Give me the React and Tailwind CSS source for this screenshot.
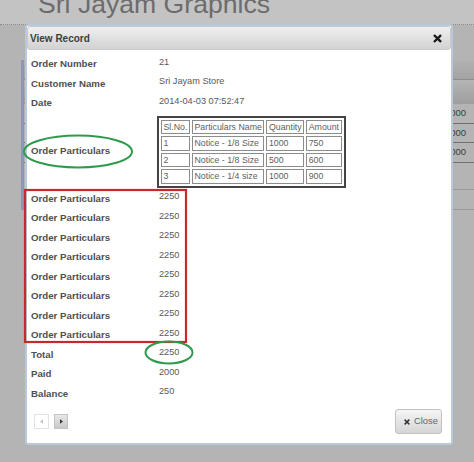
import React from 'react'

const topRows = [
  { label: 'Order Number', value: '21' },
  { label: 'Customer Name', value: 'Sri Jayam Store' },
  { label: 'Date', value: '2014-04-03 07:52:47' },
]

const particulars = [
  ['1', 'Notice - 1/8 Size', '1000', '750'],
  ['2', 'Notice - 1/8 Size', '500', '600'],
  ['3', 'Notice - 1/4 size', '1000', '900'],
]

const bottomRows = [
  { label: 'Total', value: '2250' },
  { label: 'Paid', value: '2000' },
  { label: 'Balance', value: '250' },
]

function XIcon({ className }) {
  return (
    <svg viewBox="0 0 10 10" className={className}>
      <path d="M2 2 L8 8 M8 2 L2 8" stroke="currentColor" strokeWidth="2.6" strokeLinecap="square" fill="none" />
    </svg>
  )
}

function Row({ label, value }) {
  return (
    <div className="flex items-center h-[19.5px]">
      <div className="w-[128px] shrink-0 font-bold text-[9.7px] text-[#505050]">{label}</div>
      <div className="mb-[4px] text-[9.2px] text-[#595959]">{value}</div>
    </div>
  )
}

function ParticularsTable() {
  const cell = 'border border-[#8c8c8c] px-[1.5px] text-[8.8px] leading-[12.5px] text-[#606060] font-normal whitespace-nowrap text-left'
  return (
    <table className="border-2 border-[#444] border-separate border-spacing-[2px]">
      <thead>
        <tr>
          <th className={`${cell} w-[26px]`}>Sl.No.</th>
          <th className={`${cell} w-[70px]`}>Particulars Name</th>
          <th className={`${cell} w-[35px]`}>Quantity</th>
          <th className={`${cell} w-[35px]`}>Amount</th>
        </tr>
      </thead>
      <tbody>
        {particulars.map((r) => (
          <tr key={r[0]}>
            {r.map((c, i) => (
              <td key={i} className={cell}>{c}</td>
            ))}
          </tr>
        ))}
      </tbody>
    </table>
  )
}

export default function App() {
  return (
    <div className="relative w-[474px] h-[462px] overflow-hidden bg-[#b4b4b4] font-['Liberation_Sans',Arial,sans-serif]">
      {/* page behind the overlay */}
      <div className="h-[25px] bg-[#c3c3c3] border-b border-dotted border-[#8a8a8a] overflow-hidden">
        <h1 className="pl-[38px] -mt-[9.5px] text-[26.6px] leading-none text-[#6c6c6c] whitespace-nowrap">Sri Jayam Graphics</h1>
      </div>
      <div className="ml-[21px] mt-[35px] border-l-[3px] border-[#8f95b6] h-[150px]">
        <div className="h-[20px] bg-linear-to-b from-[#b2b2b2] to-[#a3a3a3] border-b border-[#8d8d8d]" />
        <div className="mt-[2px] h-[22px] bg-linear-to-b from-[#b3b3b3] to-[#9e9e9e]" />
        {['2000', '1000', '3000'].map((v) => (
          <div key={v} className="h-[19.5px] border-b border-[#707070] flex items-center justify-end pr-[8px] text-[9.5px] text-[#3c3c3c]">
            {v}
          </div>
        ))}
        <div className="h-[27px] border-b border-[#9a9a9a]" />
        <div className="h-[20px] border-b border-[#9a9a9a]" />
      </div>

      {/* dialog */}
      <div className="absolute left-[25px] top-[24px] w-[428px] h-[421px] border-2 border-[#b9c8da] rounded-[3px] bg-white flex flex-col">
        <div className="h-[24px] shrink-0 flex items-center justify-between pl-[2px] pr-[8.5px] rounded-[3px] border border-[#c9c9c9] bg-linear-to-b from-[#f0f0f0] to-[#d2d2d2]">
          <span className="font-bold text-[10px] text-[#3d3d3d]">View Record</span>
          <XIcon className="w-[9px] h-[9px] text-[#1a1a1a]" />
        </div>

        <div className="pl-[4px] pt-[5px]">
          {topRows.map((r) => (
            <Row key={r.label} {...r} />
          ))}
          <div className="flex items-center py-[2px]">
            <div className="w-[126px] shrink-0 font-bold text-[9.7px] text-[#505050]">Order Particulars</div>
            <ParticularsTable />
          </div>
          {Array.from({ length: 8 }).map((_, i) => (
            <Row key={i} label="Order Particulars" value="2250" />
          ))}
          {bottomRows.map((r) => (
            <Row key={r.label} {...r} />
          ))}
        </div>

        <div className="mt-auto flex items-center justify-between pl-[7px] pr-[9px] pb-[9px]">
          <div className="flex gap-[5px]">
            <div className="w-[15px] h-[15px] border border-[#e2e2e2] bg-white flex items-center justify-center">
              <svg viewBox="0 0 4 6" className="w-[3px] h-[5px]">
                <path d="M4 0 L0 3 L4 6 Z" fill="#c4c4c4" />
              </svg>
            </div>
            <div className="w-[14px] h-[15px] border border-[#c4c4c4] bg-linear-to-b from-[#e8e8e8] to-[#c8c8c8] flex items-center justify-center">
              <svg viewBox="0 0 4 6" className="w-[3px] h-[5px]">
                <path d="M0 0 L4 3 L0 6 Z" fill="#333" />
              </svg>
            </div>
          </div>
          <button className="w-[47px] h-[25px] rounded-[3px] border border-[#c2c2c2] bg-linear-to-b from-[#f5f5f5] to-[#d5d5d5] flex items-center gap-[4px] pl-[8px] text-[9.4px] text-[#666]">
            <XIcon className="w-[6px] h-[6px] text-[#333]" />
            Close
          </button>
        </div>
      </div>

      {/* hand-drawn annotations */}
      <svg className="absolute inset-0 pointer-events-none" width="474" height="462" viewBox="0 0 474 462">
        <rect x="25" y="190" width="161" height="152" fill="none" stroke="#c8272d" strokeWidth="2.2" />
        <ellipse cx="78" cy="151.5" rx="54" ry="16" fill="none" stroke="#2f9a4c" strokeWidth="2" />
        <ellipse cx="169" cy="352.5" rx="23.5" ry="11" fill="none" stroke="#2f9a4c" strokeWidth="2" />
      </svg>
    </div>
  )
}
